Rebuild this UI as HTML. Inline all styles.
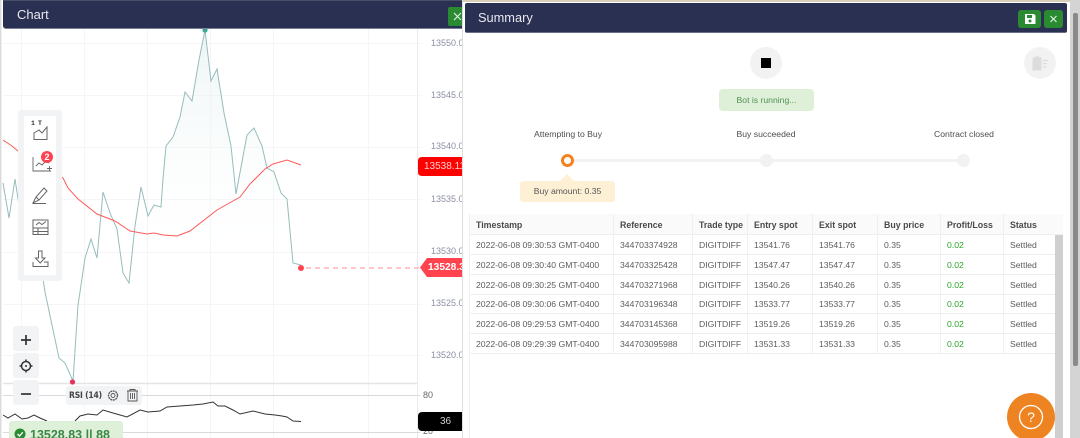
<!DOCTYPE html>
<html><head><meta charset="utf-8"><style>
html,body{margin:0;padding:0;width:1080px;height:438px;overflow:hidden;background:#fff}
body{position:relative;font-family:"Liberation Sans",sans-serif}
div,span{position:absolute;box-sizing:border-box}
.t{white-space:nowrap}
.ax{font:9px/12px "Liberation Sans",sans-serif;color:#8b8fa3;left:431px;white-space:nowrap}
.tb{position:absolute;left:0;top:0}
.row,.hd{left:470px;width:586px;height:20px;border-bottom:1px solid #eeeeee;font-size:8.650px;line-height:20px;color:#5c5c5c}
.hd{width:593px;background:#fafafa;font-weight:bold;font-size:8.800px;color:#4a4a4a}
.row span,.hd span{top:0;white-space:nowrap}
.c1{left:6px}.c2{left:150px}.c3{left:229px}.c4{left:284px}.c5{left:349px}.c6{left:414px}.c7{left:477px}.c8{left:540px}
.g{color:#2aa52a}
.v{top:214px;width:1px;height:139px;background:#f0f0f0}
.lb{font-size:8.650px;color:#4d4d4d;top:128px;line-height:12px;white-space:nowrap;transform:translateX(-50%)}
</style></head><body>

<!-- chart -->
<svg class="tb" width="464" height="438" viewBox="0 0 464 438" fill="none">
<rect x="0" y="0" width="1.5" height="438" fill="#dcdcdc"/>
<g stroke="#f4f5f6" stroke-width="1">
<path d="M21.5 29V383M84.5 29V438M147.5 29V438M210.5 29V438M273.5 29V438M368.5 29V438"/>
<path d="M3 43.5H422M3 95.5H422M3 147.5H422M3 199.5H422M3 252.5H422M3 304.5H422M3 355.5H422"/>
</g>
<path d="M417.5 29V438" stroke="#ebebeb"/>
<path d="M3 383.5H417" stroke="#e4e4e4" stroke-width="1.5"/>
<path d="M3 395.5H420" stroke="#dadada"/>
<path d="M3 432.5H420" stroke="#dadada"/>
<defs><linearGradient id="f" x1="0" y1="30" x2="0" y2="270" gradientUnits="userSpaceOnUse"><stop offset="0" stop-color="#e6f0f0" stop-opacity=".7"/><stop offset="1" stop-color="#fff" stop-opacity="0"/></linearGradient></defs>
<path d="M148 216L154 205L161 207L163 179L166 146L173 137L180 117L185 92L192 101L199 60L205 30L211 81L217 69L224 113L231 146L236 194L247 135L254 128L262 146L267 168L274 172L281 193L287 199L293 263L301 265V300H148Z" fill="url(#f)"/>
<path d="M3 183L9 218L15 179L20 212L26 150L35 215L43 279L45 292L59 358L65 363L73 381L78 305L80 292L85 258L91 239L97 258L103 192L110 213L117 229L123 273L129 283L135 226L141 187L148 216L154 205L161 207L163 179L166 146L173 137L180 117L185 92L192 101L199 60L205 30L211 81L217 69L224 113L231 146L236 194L247 135L254 128L262 146L267 168L274 172L281 193L287 199L293 263L301 265" stroke="#97bcbc" stroke-width="1"/>
<path d="M3 140L12 146L18 151L40 165L63 178L68 188L78 199L97 214L115 221L130 231L147 234L154 233L163 235L177 236L190 231L217 210L240 197L250 184L265 169L273 164L287 160L301 165" stroke="#ff5a5a" stroke-width="1"/>
<path d="M3 415L8 418L15 414L22 419L28 418L34 415L40 418L47 421M75 421L80 416L88 414L97 415L103 410L113 413L127 417L140 410L148 412L160 411L167 407L193 405L203 404L213 402L218 406L225 406L233 410L240 414L253 411L265 414L275 415L282 416L287 417L293 421L301 421.500" stroke="#333" stroke-width="1"/>
<circle cx="205" cy="30" r="2.600" fill="#36a89a"/>
<circle cx="72.500" cy="382" r="2.600" fill="#e8325a"/>
<path d="M306 268H422" stroke="#ffb3b8" stroke-width="1.500" stroke-dasharray="5 4"/>
<circle cx="301" cy="268" r="3" fill="#ff444f"/>
<path d="M462 258H427L420 267.500L427 277H462Z" fill="#ff444f"/>
<path d="M462 157H422Q418 157 418 161V172Q418 176 422 176H462Z" fill="#f00"/>
</svg>
<div class="t" style="left:424px;top:160px;font:10px/13px 'Liberation Sans',sans-serif;color:#ffd0d0;width:38px;overflow:hidden">13538.11</div>
<div class="t" style="left:428px;top:261px;font:bold 10.200px/14px 'Liberation Sans',sans-serif;color:#fff;width:34px;overflow:hidden">13528.33</div>
<div class="ax" style="top:37px">13550.0</div>
<div class="ax" style="top:89px">13545.0</div>
<div class="ax" style="top:140px">13540.0</div>
<div class="ax" style="top:193px">13535.0</div>
<div class="ax" style="top:245px">13530.0</div>
<div class="ax" style="top:297px">13525.0</div>
<div class="ax" style="top:349px">13520.0</div>
<div class="ax" style="top:389px;left:423px;color:#666">80</div>
<div class="ax" style="top:425px;left:423px;color:#666">20</div>
<div style="left:418px;top:412px;width:44px;height:19px;background:#000;border-radius:4px 0 0 4px"></div>
<div class="t" style="left:440px;top:416px;font:10px/12px 'Liberation Sans',sans-serif;color:#ccc">36</div>

<!-- toolbar -->
<div style="left:18px;top:110px;width:44px;height:171px;background:#f2f3f4;border-radius:3px"></div>
<div style="left:24px;top:116px;width:32px;height:159px;background:#fff"></div>
<div class="t" style="left:31px;top:120px;font:bold 6.500px/8px 'Liberation Mono',monospace;color:#333;letter-spacing:-.4px">1 T</div>
<svg class="tb" width="70" height="290" fill="none" stroke="#666" stroke-width="1">
<path d="M34 139.500V133L39 130L42 133L47 127V139.500Z"/>
<path d="M33 157V171H51M47 168.500H52M49.500 166V171" stroke-width=".9"/>
<path d="M36 166L39 163L42 165L46 161L49 163" stroke-width=".9"/>
<path d="M33 203L36 197L44 188L47 191L39 200L33 203ZM36 197L39 200M33 203.500H46" stroke-width="1"/>
<path d="M33 220H48V234.500H33ZM33 228H48M33 231.500H48M38 228V234.500"/>
<path d="M36 225L39 222.500L42 224.500L46 221.500"/>
<path d="M38.500 251H42V258H45L40.200 263L35.500 258H38.500ZM33 262V266.500H48V262H44"/>
</svg>
<div style="left:41px;top:151px;width:12px;height:12px;border-radius:50%;background:#ff444f;color:#fff;font:bold 9px/12px 'Liberation Sans',sans-serif;text-align:center">2</div>

<!-- zoom -->
<div style="left:13px;top:326px;width:26px;height:25px;background:#f2f3f4;border-radius:3px"></div>
<div style="left:13px;top:353px;width:26px;height:25px;background:#f2f3f4;border-radius:3px"></div>
<div style="left:13px;top:380px;width:26px;height:25px;background:#f2f3f4;border-radius:3px"></div>
<svg class="tb" width="60" height="410" fill="none" stroke="#333">
<path d="M21 340H31M26 335V345" stroke-width="1.700"/>
<circle cx="26" cy="366" r="4.500" stroke-width="1.500"/>
<path d="M26 359.500V362M26 370V372.500M19.500 366H22M30 366H32.500M25 366H27" stroke-width="1.500"/>
<path d="M21 394H31" stroke-width="1.700"/>
</svg>

<!-- rsi -->
<div style="left:66px;top:386px;width:76px;height:19px;background:#f2f3f4;border-radius:3px"></div>
<div class="t" style="left:69px;top:391px;font:bold 8.500px/11px 'DejaVu Sans Condensed','DejaVu Sans',sans-serif;color:#444;letter-spacing:-.2px">RSI (14)</div>
<svg class="tb" width="150" height="410" fill="none" stroke="#555" stroke-width=".9">
<circle cx="113" cy="395.500" r="2"/>
<circle cx="113" cy="395.500" r="4.500" stroke-width="1.300" stroke-dasharray="2 .6"/>
<path d="M127 391H138M130 391V389.500H135V391M128 391V401H137V391M130.500 393V399M132.500 393V399M134.500 393V399"/>
</svg>

<!-- status pill -->
<div style="left:9px;top:421px;width:114px;height:20px;background:#dff0d8;border-radius:3px"></div>
<svg class="tb" width="40" height="438"><circle cx="20" cy="434" r="5.500" fill="#2a8a32"/><path d="M17.500 434L19.500 436L22.800 432.200" stroke="#fff" stroke-width="1.300" fill="none"/></svg>
<div class="t" style="left:30px;top:428px;font:bold 12.500px/14px 'Liberation Sans',sans-serif;color:#3a8748">13528.83 || 88</div>

<!-- chart header -->
<div style="left:3px;top:0;width:462px;height:29px;background:#2a3052;border-radius:0 0 3px 3px;border-top:1px solid #4a4d68;border-bottom:1px solid #777b94"></div>
<div class="t" style="left:17px;top:6px;font:13px/17px 'Liberation Sans',sans-serif;color:#e8e8ee">Chart</div>
<div style="left:448px;top:7px;width:16px;height:19px;background:#2a8a32;border-radius:2px"></div>
<svg class="tb" width="464" height="30" stroke="#dff2e0" stroke-width="1.200"><path d="M454 13L461 20M461 13L454 20"/></svg>

<!-- summary -->
<div style="left:462px;top:0;width:608px;height:438px;background:#fff;border-left:1px solid #dedede"></div>
<div style="left:463px;top:0;width:607px;height:2px;background:#d8cfb8"></div>
<div style="left:465px;top:3px;width:602px;height:30px;background:#2a3052;border-radius:2px;border-bottom:1px solid #6a6e8a"></div>
<div class="t" style="left:478px;top:9px;font:12.800px/18px 'Liberation Sans',sans-serif;color:#e8e8ee">Summary</div>
<div style="left:1018px;top:10px;width:23px;height:18px;background:#2a8a32;border-radius:3px"></div>
<div style="left:1044px;top:10px;width:19px;height:18px;background:#2a8a32;border-radius:3px"></div>
<svg class="tb" width="1080" height="80" fill="none">
<path d="M1025 14H1034L1034.500 14.500L1035.500 15.500V24H1025Z" fill="#fff"/>
<rect x="1027" y="15" width="5" height="3" fill="#2a8a32"/>
<circle cx="1030" cy="21" r="1.500" fill="#2a8a32"/>
<path d="M1050.500 16L1056.500 22M1056.500 16L1050.500 22" stroke="#dff2e0" stroke-width="1.100"/>
<circle cx="766" cy="63" r="16" fill="#f2f2f2"/>
<rect x="761" y="58" width="10" height="10" fill="#000"/>
<circle cx="1040" cy="63" r="16" fill="#f2f2f2"/>
<path d="M1033 58H1041V70H1033Z M1035 57H1039" fill="#dcdcdc" stroke="#dcdcdc"/>
<path d="M1043 60.500H1048M1043 63.500H1047M1043 67H1046" stroke="#dcdcdc" stroke-width="1.200"/>
</svg>
<div style="left:719px;top:89px;width:95px;height:22px;background:#dff0d8;border-radius:4px;color:#4f9155;font-size:8.650px;line-height:22px;text-align:center">Bot is running...</div>
<div class="lb" style="left:568px">Attempting to Buy</div>
<div class="lb" style="left:766px">Buy succeeded</div>
<div class="lb" style="left:964px">Contract closed</div>
<div style="left:572px;top:159px;width:390px;height:3px;background:#f2f2f2"></div>
<div style="left:759.500px;top:154px;width:13px;height:13px;border-radius:50%;background:#f2f2f2"></div>
<div style="left:957px;top:154px;width:13px;height:13px;border-radius:50%;background:#f2f2f2"></div>
<div style="left:561px;top:154px;width:13px;height:13px;border-radius:50%;background:#fff;border:3px solid #f58220"></div>
<div style="left:520px;top:181px;width:95px;height:21px;background:#fdf0d5;border-radius:3px;color:#555;font-size:8.650px;line-height:21px;text-align:center">Buy amount: 0.35</div>
<div style="left:560px;top:174px;width:0;height:0;border-left:7.500px solid transparent;border-right:7.500px solid transparent;border-bottom:7px solid #fdf0d5"></div>

<!-- table -->
<div class="hd" style="top:214px;height:21px;line-height:22px"><span class="c1">Timestamp</span><span class="c2">Reference</span><span class="c3">Trade type</span><span class="c4">Entry spot</span><span class="c5">Exit spot</span><span class="c6">Buy price</span><span class="c7">Profit/Loss</span><span class="c8">Status</span></div>
<div class="row" style="top:235px"><span class="c1">2022-06-08 09:30:53 GMT-0400</span><span class="c2">344703374928</span><span class="c3">DIGITDIFF</span><span class="c4">13541.76</span><span class="c5">13541.76</span><span class="c6">0.35</span><span class="c7 g">0.02</span><span class="c8">Settled</span></div>
<div class="row" style="top:254.800px"><span class="c1">2022-06-08 09:30:40 GMT-0400</span><span class="c2">344703325428</span><span class="c3">DIGITDIFF</span><span class="c4">13547.47</span><span class="c5">13547.47</span><span class="c6">0.35</span><span class="c7 g">0.02</span><span class="c8">Settled</span></div>
<div class="row" style="top:274.500px"><span class="c1">2022-06-08 09:30:25 GMT-0400</span><span class="c2">344703271968</span><span class="c3">DIGITDIFF</span><span class="c4">13540.26</span><span class="c5">13540.26</span><span class="c6">0.35</span><span class="c7 g">0.02</span><span class="c8">Settled</span></div>
<div class="row" style="top:294.200px"><span class="c1">2022-06-08 09:30:06 GMT-0400</span><span class="c2">344703196348</span><span class="c3">DIGITDIFF</span><span class="c4">13533.77</span><span class="c5">13533.77</span><span class="c6">0.35</span><span class="c7 g">0.02</span><span class="c8">Settled</span></div>
<div class="row" style="top:314px"><span class="c1">2022-06-08 09:29:53 GMT-0400</span><span class="c2">344703145368</span><span class="c3">DIGITDIFF</span><span class="c4">13519.26</span><span class="c5">13519.26</span><span class="c6">0.35</span><span class="c7 g">0.02</span><span class="c8">Settled</span></div>
<div class="row" style="top:333.700px"><span class="c1">2022-06-08 09:29:39 GMT-0400</span><span class="c2">344703095988</span><span class="c3">DIGITDIFF</span><span class="c4">13531.33</span><span class="c5">13531.33</span><span class="c6">0.35</span><span class="c7 g">0.02</span><span class="c8">Settled</span></div>
<div class="v" style="left:613px"></div><div class="v" style="left:692px"></div><div class="v" style="left:747px"></div><div class="v" style="left:812px"></div><div class="v" style="left:877px"></div><div class="v" style="left:940px"></div><div class="v" style="left:1003px"></div>
<div style="left:469px;top:214px;width:1px;height:224px;background:#f0f0f0"></div>
<div style="left:1055px;top:235px;width:8px;height:203px;background:#cfcfcf"></div>

<!-- outer scrollbar -->
<div style="left:1070px;top:0;width:10px;height:438px;background:#d4d4d4"></div>
<div style="left:1073px;top:13px;width:5px;height:353px;background:#8a8a8a;border-radius:2px"></div>

<!-- help -->
<svg class="tb" width="1080" height="438" fill="none">
<circle cx="1031" cy="417" r="24" fill="#ee8421"/>
<circle cx="1031" cy="417" r="11.500" stroke="#fff" stroke-width="1.300"/>
</svg>
<div class="t" style="left:1025px;top:408px;width:12px;text-align:center;font:14px/18px 'Liberation Sans',sans-serif;color:#fff">?</div>
</body></html>
